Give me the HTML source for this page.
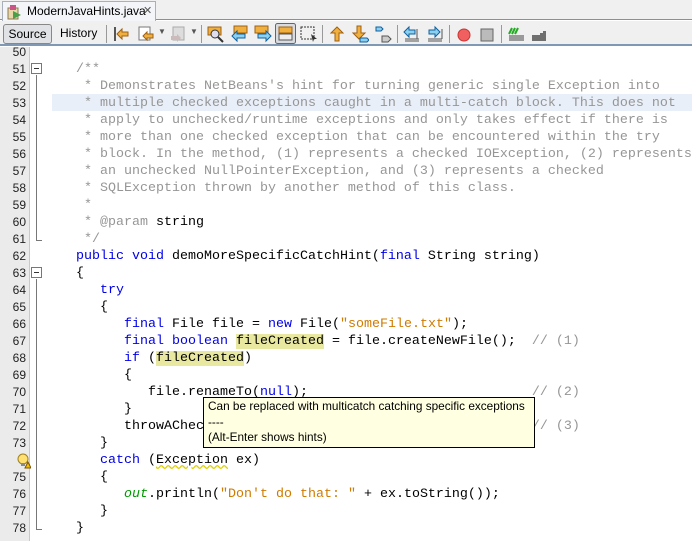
<!DOCTYPE html>
<html><head><style>
*{margin:0;padding:0;box-sizing:border-box}
body{width:692px;height:541px;overflow:hidden;background:#fff;font-family:"Liberation Sans",sans-serif;position:relative}
#tabs{position:absolute;left:0;top:0;width:692px;height:20px;background:#f0f0f0;border-bottom:1px solid #8a9099}
#tab{position:absolute;left:2px;top:1px;width:154px;height:20px;background:#f3f5f8;border:1px solid #a8b0bb;border-bottom:none;font-size:12px;line-height:19px;padding-left:24px;color:#000}
#tb{position:absolute;left:0;top:21px;width:692px;height:25px;background:#f0f0f0;border-bottom:2px solid #7f99b4}
.btn{position:absolute;font-size:12px;top:3px;height:20px;line-height:18px}
.sep{position:absolute;top:4px;width:1px;height:18px;background:#999}
.ic{position:absolute;top:4px;width:18px;height:18px}
#gut{position:absolute;left:0;top:47px;width:30px;height:494px;background:#ebebeb;border-right:1px solid #c9c9c9}
.ln{position:absolute;left:0;width:26px;text-align:right;font-size:12px;color:#222;height:17px;line-height:17px}
.cl{position:absolute;left:52px;white-space:pre;font-family:"Liberation Mono",monospace;font-size:13.33px;height:17px;line-height:17px;color:#000}
.k{color:#0000e6}.c{color:#969696}.s{color:#ce7b00}.o{color:#009900;font-style:italic}
.hl{background:#e8e8a0}
#tip{position:absolute;left:203px;top:397px;width:332px;height:51px;background:#ffffe1;border:1px solid #000;font-size:11.8px;line-height:15.5px;padding:1px 4px;color:#000;white-space:nowrap;overflow:hidden}
.fold{position:absolute;left:31px;width:11px;height:11px;border:1px solid #777;background:#fff}
.fold:after{content:"";position:absolute;left:2px;top:4px;width:5px;height:1px;background:#333}
.vl{position:absolute;left:36px;width:1px;background:#777}
</style></head><body>
<div id="tabs"><div id="tab"><svg style="position:absolute;left:4px;top:2px" width="16" height="16"><rect x="1" y="4" width="10" height="11" fill="#e8d7a8" stroke="#8a7a50"/><path d="M6 7 l8 4 -8 4z" fill="#4aa04a"/><rect x="3" y="1" width="6" height="5" fill="#c58" /></svg>ModernJavaHints.java<span style="position:absolute;left:140px;top:0;font-size:11px;color:#555">✕</span></div></div>
<div id="tb">
<div class="btn" style="left:3px;width:49px;border:1px solid #888;border-radius:3px;background:#e0e2e6;text-align:center">Source</div>
<div class="btn" style="left:60px">History</div>
<div class="sep" style="left:106px"></div>
<svg class="ic" style="left:112px" viewBox="0 0 18 18"><rect x="2" y="2" width="2" height="14" fill="#555"/><path d="M5 9 l5-5 v3 h6 v4 h-6 v3z" fill="#f0b040" stroke="#a06010"/></svg>
<svg class="ic" style="left:137px" viewBox="0 0 18 18"><rect x="2" y="2" width="11" height="13" fill="#fff" stroke="#777"/><path d="M6 11 l4-4 v2 h6 v4 h-6 v2z" fill="#f0b040" stroke="#a06010"/></svg>
<span style="position:absolute;left:158px;top:6px;font-size:8px;color:#555">▼</span>
<svg class="ic" style="left:169px" viewBox="0 0 18 18"><rect x="4" y="2" width="11" height="13" fill="#ddd" stroke="#aaa"/><path d="M2 11 h6 v-2 l4 4 -4 4 v-2 h-6z" fill="#cbb" /></svg>
<span style="position:absolute;left:190px;top:6px;font-size:8px;color:#555">▼</span>
<div class="sep" style="left:201px"></div>
<svg class="ic" style="left:207px" viewBox="0 0 18 18"><rect x="1" y="2" width="13" height="8" fill="#f0b040" stroke="#a06010"/><circle cx="8" cy="9" r="4" fill="#dde" stroke="#333"/><path d="M11 12 l5 5" stroke="#333" stroke-width="2"/></svg>
<svg class="ic" style="left:231px" viewBox="0 0 18 18"><rect x="3" y="1" width="13" height="7" fill="#f0b040" stroke="#a06010"/><path d="M1 11 l5-5 v3 h8 v4 h-8 v3z" fill="#8cd0f0" stroke="#1060a0"/></svg>
<svg class="ic" style="left:254px" viewBox="0 0 18 18"><rect x="1" y="1" width="13" height="7" fill="#f0b040" stroke="#a06010"/><path d="M17 11 l-5-5 v3 h-8 v4 h8 v3z" fill="#8cd0f0" stroke="#1060a0"/></svg>
<svg style="position:absolute;left:275px;top:2px" width="21" height="21" viewBox="0 0 21 21"><rect x="0.5" y="0.5" width="20" height="20" rx="2" fill="#d8dbe0" stroke="#666"/><rect x="4" y="4" width="13" height="6" fill="#f0b040" stroke="#a06010"/><rect x="4" y="11" width="13" height="6" fill="#eee" stroke="#555"/></svg>
<svg class="ic" style="left:300px" viewBox="0 0 18 18"><rect x="1" y="2" width="13" height="12" fill="none" stroke="#333" stroke-dasharray="2 1"/><path d="M11 9 l6 5 -3 0 -1 3z" fill="#333"/></svg>
<div class="sep" style="left:322px"></div>
<svg class="ic" style="left:328px" viewBox="0 0 18 18"><path d="M7 16 v-8 h-4 l6-6 6 6 h-4 v8z" fill="#f0b040" stroke="#a06010"/></svg>
<svg class="ic" style="left:351px" viewBox="0 0 18 18"><path d="M6 1 v7 h-4 l6 6 6-6 h-4 v-7z" fill="#f0b040" stroke="#a06010"/><path d="M9 13 h7 l2 2-2 2 h-7z" fill="#8cd0f0" stroke="#1060a0"/></svg>
<svg class="ic" style="left:374px" viewBox="0 0 18 18"><path d="M2 2 h5 l2 2-2 2 h-5z" fill="#8cd0f0" stroke="#1060a0"/><path d="M8 11 h6 l3 3-3 3 h-6z" fill="#ccc" stroke="#555"/></svg>
<div class="sep" style="left:397px"></div>
<svg class="ic" style="left:403px" viewBox="0 0 18 18"><path d="M1 7 l5-5 v3 h6 v4 h-6 v3z" fill="#8cd0f0" stroke="#1060a0"/><path d="M2 14h14M2 16h14M14 4v10" stroke="#555"/></svg>
<svg class="ic" style="left:426px" viewBox="0 0 18 18"><path d="M14 7 l-5-5 v3 h-6 v4 h6 v3z" fill="#8cd0f0" stroke="#1060a0"/><path d="M2 14h14M2 16h14M16 4v10" stroke="#555"/></svg>
<div class="sep" style="left:449px"></div>
<svg class="ic" style="left:455px" viewBox="0 0 18 18"><circle cx="9" cy="10" r="6" fill="#f06060" stroke="#c33"/></svg>
<svg class="ic" style="left:478px" viewBox="0 0 18 18"><rect x="3" y="4" width="12" height="12" fill="#bbb" stroke="#666"/></svg>
<div class="sep" style="left:501px"></div>
<svg class="ic" style="left:507px" viewBox="0 0 18 18"><path d="M2 9 l3-6 M5 9 l3-6 M8 9 l3-6" stroke="#2a2" stroke-width="2"/><path d="M2 11h15M2 13h15M2 15h15" stroke="#444"/></svg>
<svg class="ic" style="left:530px" viewBox="0 0 18 18"><path d="M2 11h14M2 13h14M2 15h14M10 9h6M13 7h3" stroke="#222" stroke-width="1.3"/></svg>
</div>
<div id="gut"></div>
<div style="position:absolute;left:52px;top:94px;width:640px;height:17px;background:#e9eff8"></div>
<div class="fold" style="top:63px"></div><div class="vl" style="top:75px;height:165px"></div><div style="position:absolute;left:36px;top:240px;width:6px;height:1px;background:#777"></div>
<div class="fold" style="top:267px"></div><div class="vl" style="top:279px;height:250px"></div><div style="position:absolute;left:36px;top:529px;width:6px;height:1px;background:#777"></div>
<svg style="position:absolute;left:17px;top:453px" width="14" height="16"><circle cx="6" cy="6" r="5" fill="#ffe070" stroke="#a08020"/><rect x="4" y="10" width="4" height="3" fill="#888"/><path d="M8 15 l3-6 3 6z" fill="#f0c000" stroke="#805000"/></svg>
<div class="ln" style="top:44px">50</div><div class="ln" style="top:61px">51</div><div class="ln" style="top:78px">52</div><div class="ln" style="top:95px">53</div><div class="ln" style="top:112px">54</div><div class="ln" style="top:129px">55</div><div class="ln" style="top:146px">56</div><div class="ln" style="top:163px">57</div><div class="ln" style="top:180px">58</div><div class="ln" style="top:197px">59</div><div class="ln" style="top:214px">60</div><div class="ln" style="top:231px">61</div><div class="ln" style="top:248px">62</div><div class="ln" style="top:265px">63</div><div class="ln" style="top:282px">64</div><div class="ln" style="top:299px">65</div><div class="ln" style="top:316px">66</div><div class="ln" style="top:333px">67</div><div class="ln" style="top:350px">68</div><div class="ln" style="top:367px">69</div><div class="ln" style="top:384px">70</div><div class="ln" style="top:401px">71</div><div class="ln" style="top:418px">72</div><div class="ln" style="top:435px">73</div><div class="ln" style="top:469px">75</div><div class="ln" style="top:486px">76</div><div class="ln" style="top:503px">77</div><div class="ln" style="top:520px">78</div>
<div class="cl c" style="top:61px">   /**</div>
<div class="cl c" style="top:78px">    * Demonstrates NetBeans's hint for turning generic single Exception into</div>
<div class="cl c" style="top:95px">    * multiple checked exceptions caught in a multi-catch block. This does not</div>
<div class="cl c" style="top:112px">    * apply to unchecked/runtime exceptions and only takes effect if there is</div>
<div class="cl c" style="top:129px">    * more than one checked exception that can be encountered within the try</div>
<div class="cl c" style="top:146px">    * block. In the method, (1) represents a checked IOException, (2) represents</div>
<div class="cl c" style="top:163px">    * an unchecked NullPointerException, and (3) represents a checked</div>
<div class="cl c" style="top:180px">    * SQLException thrown by another method of this class.</div>
<div class="cl c" style="top:197px">    *</div>
<div class="cl c" style="top:214px">    * @param <span style="color:#000">string</span></div>
<div class="cl c" style="top:231px">    */</div>
<div class="cl" style="top:248px">   <span class="k">public void</span> demoMoreSpecificCatchHint(<span class="k">final</span> String string)</div>
<div class="cl" style="top:265px">   {</div>
<div class="cl" style="top:282px">      <span class="k">try</span></div>
<div class="cl" style="top:299px">      {</div>
<div class="cl" style="top:316px">         <span class="k">final</span> File file = <span class="k">new</span> File(<span class="s">"someFile.txt"</span>);</div>
<div class="cl" style="top:333px">         <span class="k">final boolean</span> <span class="hl">fileCreated</span> = file.createNewFile();  <span class="c">// (1)</span></div>
<div class="cl" style="top:350px">         <span class="k">if</span> (<span class="hl">fileCreated</span>)</div>
<div class="cl" style="top:367px">         {</div>
<div class="cl" style="top:384px">            file.renameTo(<span class="k">null</span>);                            <span class="c">// (2)</span></div>
<div class="cl" style="top:401px">         }</div>
<div class="cl" style="top:418px">         throwACheckedException();                          <span class="c">// (3)</span></div>
<div class="cl" style="top:435px">      }</div>
<div class="cl" style="top:452px">      <span class="k">catch</span> (<span style="text-decoration:underline wavy #e0d000">Exception</span> ex)</div>
<div class="cl" style="top:469px">      {</div>
<div class="cl" style="top:486px">         <span class="o">out</span>.println(<span class="s">"Don't do that: "</span> + ex.toString());</div>
<div class="cl" style="top:503px">      }</div>
<div class="cl" style="top:520px">   }</div>
<div id="tip">Can be replaced with multicatch catching specific exceptions<br>----<br>(Alt-Enter shows hints)</div>
</body></html>
